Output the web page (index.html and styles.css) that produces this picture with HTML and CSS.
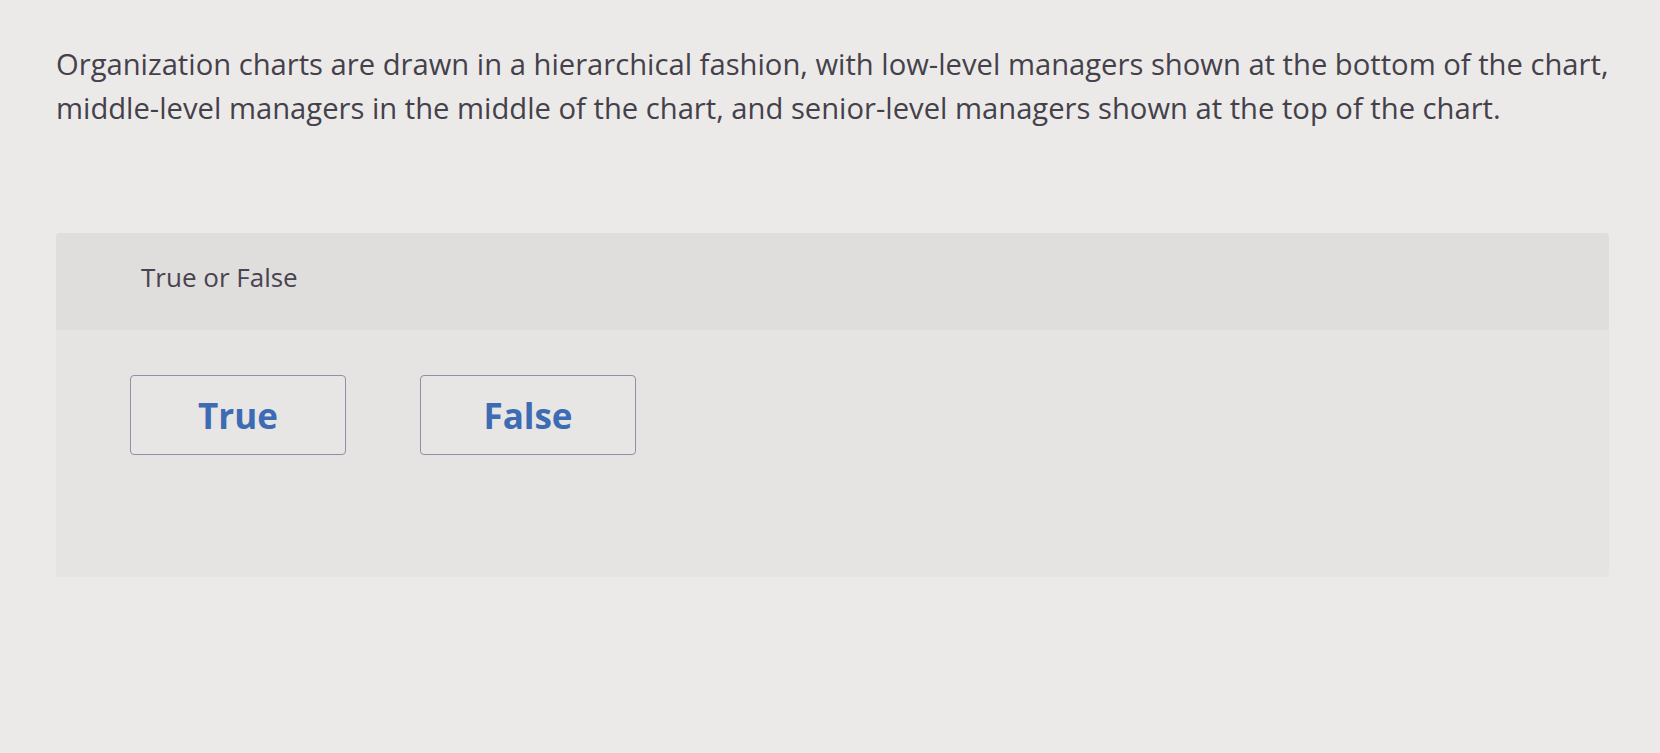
FILE: index.html
```html
<!DOCTYPE html>
<html lang="en">
<head>
<meta charset="utf-8">
<title>True or False</title>
<link rel="stylesheet" href="styles.css">
</head>
<body>
<main class="page">
  <p class="prompt">Organization charts are drawn in a hierarchical fashion, with low-level managers shown at the bottom of the chart, middle-level managers in the middle of the chart, and senior-level managers shown at the top of the chart.</p>
  <section class="question">
    <header class="question-head">True or False</header>
    <div class="choices">
      <button class="choice" type="button">True</button>
      <button class="choice" type="button">False</button>
    </div>
  </section>
</main>
</body>
</html>
```

FILE: styles.css
```css
html, body {
  margin: 0;
  padding: 0;
  background: #ebeae8;
}

.page {
  padding: 42px 51px 0 56px;
  font-family: "Open Sans", Lato, sans-serif;
  color: #45414b;
}

.prompt {
  margin: 0;
  font-size: 29.2px;
  line-height: 44px;
  max-width: 1553px;
}

.question {
  margin-top: 103px;
  width: 1553px;
  height: 344px;
  background: #e5e4e2;
  border-radius: 4px;
  overflow: hidden;
}

.question-head {
  height: 97px;
  box-sizing: border-box;
  padding: 24px 0 0 85px;
  background: #dfdedd;
  font-size: 26px;
  line-height: 40px;
  color: #48434f;
}

.choices {
  display: flex;
  gap: 74px;
  padding: 45px 0 0 74px;
}

.choice {
  width: 216px;
  height: 80px;
  box-sizing: border-box;
  border: 1.5px solid #8d90a6;
  border-radius: 4px;
  background: #e7e6e4;
  font-family: "Open Sans", Lato, sans-serif;
  font-weight: 700;
  font-size: 35px;
  color: #3d6bb4;
  padding: 0;
  cursor: pointer;
}
```
